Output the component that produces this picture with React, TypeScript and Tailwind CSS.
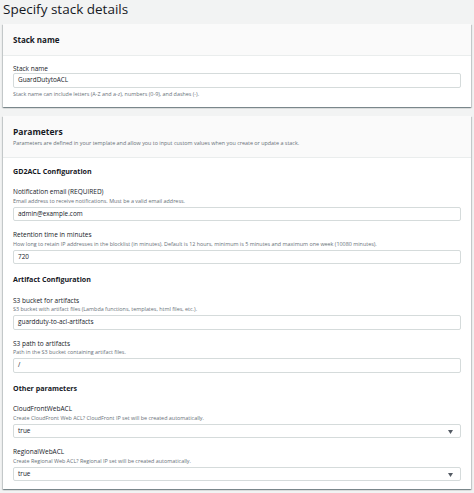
import React from "react";

const font = "font-['Open_Sans',sans-serif]";
const cardShadow =
  "shadow-[0_1px_1px_0_rgba(0,28,36,0.3),1px_1px_1px_0_rgba(0,28,36,0.15),-1px_1px_1px_0_rgba(0,28,36,0.15)]";

function Input({ value, select }: { value: string; select?: boolean }) {
  return (
    <div className="relative flex h-[14.5px] items-center rounded-[2px] border border-[#d5dbdb] bg-white pl-[4px] text-[6.4px] text-[#16191f]">
      <span>{value}</span>
      {select && (
        <svg className="absolute right-[7px] top-[5px]" width="5" height="4" viewBox="0 0 5 4">
          <path d="M0 0 L5 0 L2.5 4 Z" fill="#545b64" />
        </svg>
      )}
    </div>
  );
}

function Field({
  label,
  help,
  value,
  select,
  first,
}: {
  label: string;
  help: string;
  value: string;
  select?: boolean;
  first?: boolean;
}) {
  return (
    <div className={first ? "mt-[11.5px]" : "mt-[9px]"}>
      <div className="text-[6.5px] leading-[9.5px] text-[#16191f]">{label}</div>
      <div className="text-[5.4px] leading-[8.5px] text-[#687078]">{help}</div>
      <div className="mt-[1.5px]">
        <Input value={value} select={select} />
      </div>
    </div>
  );
}

function SectionHeading({ children, first }: { children: React.ReactNode; first?: boolean }) {
  return (
    <div
      className={`${first ? "" : "mt-[10px]"} text-[7.1px] font-bold leading-[10px] text-[#16191f]`}
    >
      {children}
    </div>
  );
}

export default function App() {
  return (
    <div className={`${font} min-h-[493px] w-[474px] bg-[#f2f3f3] px-[3px]`}>
      <h1 className="text-[13.5px] leading-[18px] text-[#16191f]">Specify stack details</h1>

      <div className={`mt-[6px] bg-white ${cardShadow}`}>
        <div className="flex h-[32px] items-center border-b border-[#eaeded] bg-[#fafafa] px-[10px] text-[8px] font-bold text-[#16191f]">
          Stack name
        </div>
        <div className="px-[10px] pb-[9px] pt-[7.5px]">
          <div className="text-[6.5px] leading-[9px] text-[#16191f]">Stack name</div>
          <div className="mt-[0.5px]">
            <Input value="GuardDutytoACL" />
          </div>
          <div className="mt-[2px] text-[5.4px] leading-[8px] text-[#687078]">
            Stack name can include letters (A-Z and a-z), numbers (0-9), and dashes (-).
          </div>
        </div>
      </div>

      <div className={`mt-[9px] bg-white ${cardShadow}`}>
        <div className="border-b border-[#eaeded] bg-[#fafafa] px-[10px] pb-[10px] pt-[10.5px]">
          <div className="text-[8.5px] font-bold leading-[11px] text-[#16191f]">Parameters</div>
          <div className="mt-[1.5px] text-[5.4px] leading-[8px] text-[#687078]">
            Parameters are defined in your template and allow you to input custom values when you create or update a stack.
          </div>
        </div>
        <div className="px-[10px] pb-[8px] pt-[8px]">
          <SectionHeading first>GD2ACL Configuration</SectionHeading>
          <Field
            first
            label="Notification email (REQUIRED)"
            help="Email address to receive notifications. Must be a valid email address."
            value="admin@example.com"
          />
          <Field
            label="Retention time in minutes"
            help="How long to retain IP addresses in the blocklist (in minutes). Default is 12 hours, minimum is 5 minutes and maximum one week (10080 minutes)."
            value="720"
          />

          <SectionHeading>Artifact Configuration</SectionHeading>
          <Field
            first
            label="S3 bucket for artifacts"
            help="S3 bucket with artifact files (Lambda functions, templates, html files, etc.)."
            value="guardduty-to-acl-artifacts"
          />
          <Field
            label="S3 path to artifacts"
            help="Path in the S3 bucket containing artifact files."
            value="/"
          />

          <SectionHeading>Other parameters</SectionHeading>
          <Field
            first
            label="CloudFrontWebACL"
            help="Create CloudFront Web ACL? CloudFront IP set will be created automatically."
            value="true"
            select
          />
          <Field
            label="RegionalWebACL"
            help="Create Regional Web ACL? Regional IP set will be created automatically."
            value="true"
            select
          />
        </div>
      </div>
    </div>
  );
}
